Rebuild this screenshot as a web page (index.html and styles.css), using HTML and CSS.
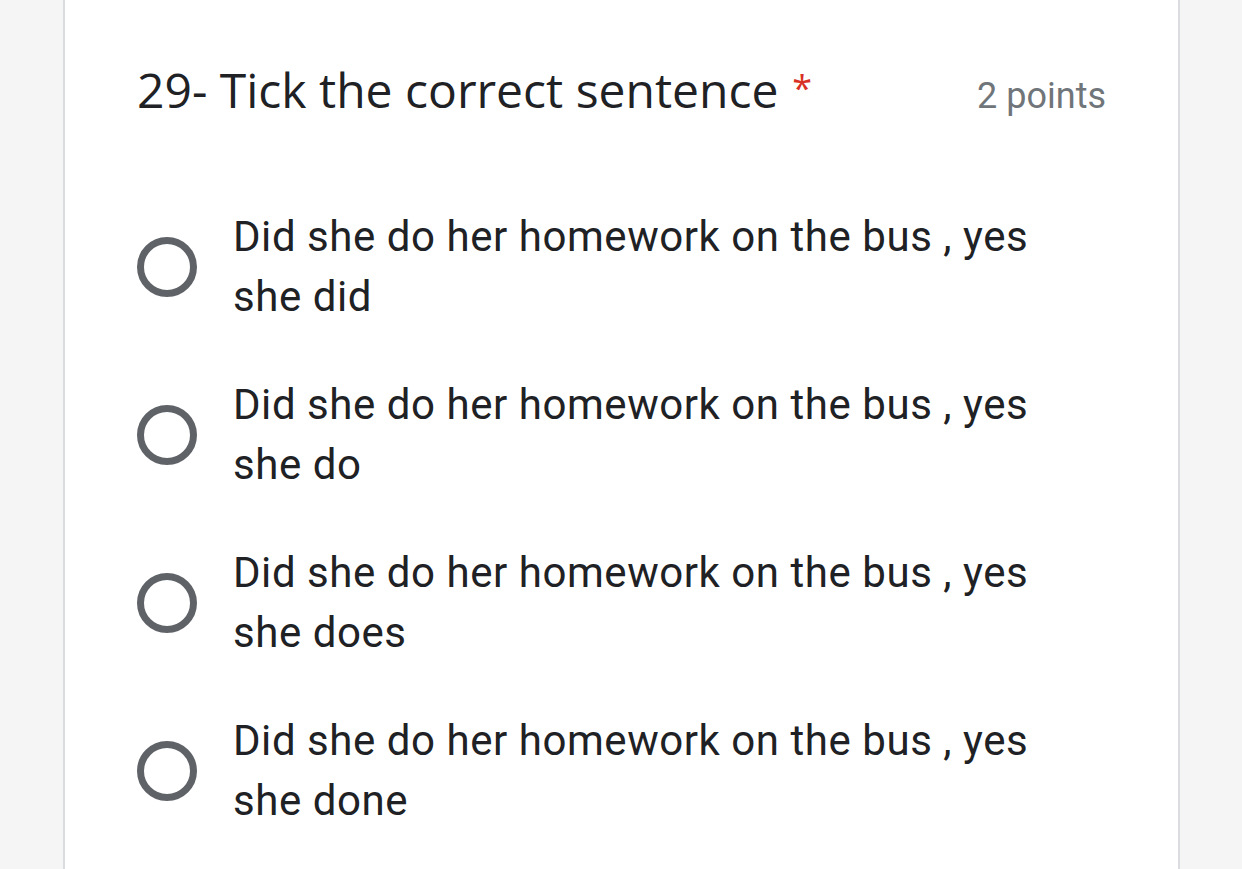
FILE: index.html
```html
<!DOCTYPE html>
<html>
<head>
<meta charset="utf-8">
<link rel="stylesheet" href="styles.css">
</head>
<body>
<div class="page">
  <div class="card">
    <div class="header">
      <div class="title">29- Tick the correct sentence<span class="req">*</span></div>
      <div class="points">2 points</div>
    </div>
    <div class="options">
      <label class="option"><span class="radio"></span><span class="text">Did she do her homework on the bus , yes she did</span></label>
      <label class="option"><span class="radio"></span><span class="text">Did she do her homework on the bus , yes she do</span></label>
      <label class="option"><span class="radio"></span><span class="text">Did she do her homework on the bus , yes she does</span></label>
      <label class="option"><span class="radio"></span><span class="text">Did she do her homework on the bus , yes she done</span></label>
    </div>
  </div>
</div>
</body>
</html>
```
FILE: styles.css
```css
html, body {
  margin: 0;
  padding: 0;
  background: #f5f5f5;
  height: 100%;
  overflow: hidden;
}
.page {
  padding: 0 62px 0 63px;
}
.card {
  margin-top: -40px;
  background: #fff;
  border: 2px solid #dadce0;
  border-radius: 16px;
  padding: 98px 72px 200px 72px;
  min-height: 900px;
}
.header {
  display: flex;
  justify-content: space-between;
  align-items: baseline;
}
.title {
  font-family: "Open Sans", sans-serif;
  font-size: 48px;
  color: #202124;
  line-height: 60px;
}
.req {
  color: #d93025;
  margin-left: 14px;
  font-size: 36px;
  position: relative;
  top: -7px;
}
.points {
  font-family: Roboto, sans-serif;
  font-size: 36px;
  color: #70757a;
}
.options {
  margin-top: 82px;
  display: flex;
  flex-direction: column;
  gap: 48px;
}
.option {
  display: flex;
  align-items: center;
  gap: 36px;
}
.radio {
  flex: none;
  width: 46px;
  height: 46px;
  border: 7px solid #5f6368;
  border-radius: 50%;
}
.text {
  font-family: Roboto, sans-serif;
  font-size: 42px;
  letter-spacing: 0.55px;
  line-height: 60px;
  color: #202124;
  width: 850px;
}
```
